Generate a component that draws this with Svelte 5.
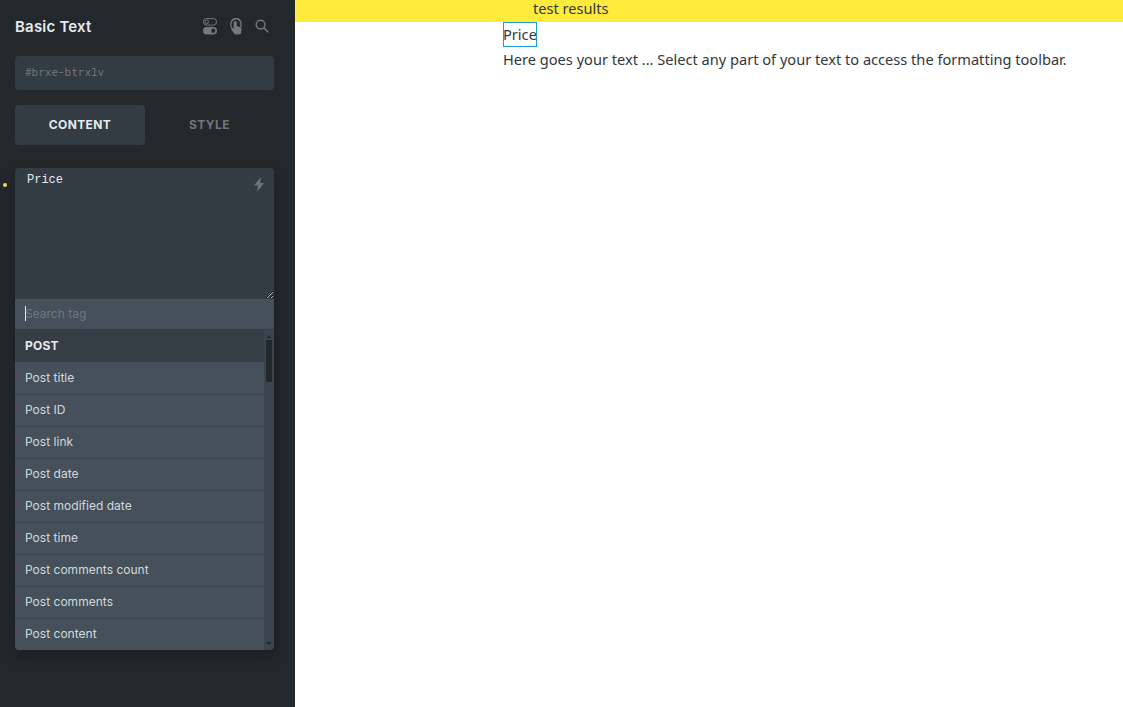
<script>
    let tags = ["Post title","Post ID","Post link","Post date","Post modified date","Post time","Post comments count","Post comments","Post content"];
</script>

<div class="builder">
    <aside class="panel">
        <header class="panelHead">
            <h1>Basic Text</h1>
            <div class="headIcons">
                <svg width="14" height="17" viewBox="0 0 15 17" class="toggles" preserveAspectRatio="none">
                    <rect x="0.5" y="0.500" width="14" height="6.6" rx="3.3" fill="none" stroke="currentColor" stroke-width="1"/>
                    <circle cx="4" cy="3.800" r="1.900" fill="none" stroke="currentColor" stroke-width="1"/>
                    <rect x="0" y="9" width="15" height="7.600" rx="3.800" fill="currentColor"/>
                    <circle cx="11" cy="12.800" r="2.200" fill="#23282d"/>
                </svg>
                <svg width="12" height="17" viewBox="0 0 14 17" class="touch" preserveAspectRatio="none">
                    <path d="M1.800 9.400A6 6 0 1 1 12.200 9.400" fill="none" stroke="currentColor" stroke-width="1.500"/>
                    <path d="M5.200 3.400c1-.7 2.600 0 2.600 1.200v3.500l3.400.9c1.400.4 2.300 1 2.300 2.200l-.5 3.600c-.2 1-.9 1.700-2 1.700H6.400c-.8 0-1.300-.3-1.700-.9L1.300 11c-.6-.9.6-2 1.600-1.200l1.400 1.100V4.600c0-.5.400-1 .9-1.200z" fill="currentColor"/>
                </svg>
                <svg width="14" height="14" viewBox="0 0 14 14" class="search">
                    <circle cx="5.600" cy="5.600" r="4.400" fill="none" stroke="currentColor" stroke-width="1.400"/>
                    <path d="M8.900 8.900L13.200 13.200" stroke="currentColor" stroke-width="1.500"/>
                </svg>
            </div>
        </header>

        <div class="cssId">#brxe-btrxlv</div>

        <div class="tabs">
            <button class="active">CONTENT</button>
            <button class="styleTab">STYLE</button>
        </div>

        <div class="control">
            <span class="dot"></span>
            <div class="box">
                <textarea spellcheck="false">Price</textarea>
                <svg class="bolt" width="10" height="15" viewBox="0 0 10 15">
                    <path d="M7 0L0 8.500H4L3 15L10 6H6Z" fill="currentColor"/>
                </svg>
                <div class="picker">
                    <div class="searchTag"><span class="caret"></span>Search tag</div>
                    <div class="listWrap">
                        <ul>
                            <li class="group">POST</li>
                            {#each tags as tag}
                                <li>{tag}</li>
                            {/each}
                        </ul>
                        <div class="scrollbar">
                            <span class="arrow up"></span>
                            <span class="thumb"></span>
                            <span class="arrow down"></span>
                        </div>
                    </div>
                </div>
            </div>
        </div>
    </aside>

    <main class="page">
        <div class="notice"><span>test results</span></div>
        <div class="content">
            <div class="priceRow"><span class="selected">Price</span></div>
            <p>Here goes your text ... Select any part of your text to access the formatting toolbar.</p>
        </div>
    </main>
</div>

<style>
    :global(body){
        margin: 0;
        background: white;
    }
    .builder{
        display: flex;
        height: 707px;
        overflow: hidden;
        font-family: Inter, "Liberation Sans", sans-serif;
    }
    .panel{
        width: 295px;
        flex-shrink: 0;
        background: #23282d;
        display: flex;
        flex-direction: column;
        padding: 0 21px 0 15px;
        box-sizing: border-box;
    }
    .panelHead{
        height: 56px;
        display: flex;
        align-items: center;
        justify-content: space-between;
        padding-bottom: 4px;
        box-sizing: border-box;
    }
    h1{
        margin: 0;
        font-size: 15px;
        font-weight: 600;
        letter-spacing: 0.2px;
        color: #e6ebee;
    }
    .headIcons{
        display: flex;
        align-items: center;
        gap: 13px;
        color: #74797e;
        margin-right: 5px;
    }
    .cssId{
        height: 34px;
        background: #333b43;
        border-radius: 4px;
        display: flex;
        align-items: center;
        padding: 0 0 3px 10px;
        box-sizing: border-box;
        font-family: "Roboto Mono", "DejaVu Sans Mono", monospace;
        font-size: 11px;
        color: #6f757b;
    }
    .tabs{
        display: grid;
        grid-template-columns: 130px 130px;
        margin-top: 15px;
    }
    .tabs button{
        height: 40px;
        border: none;
        background: transparent;
        border-radius: 4px;
        font-family: inherit;
        font-size: 12px;
        font-weight: 700;
        letter-spacing: 0.4px;
        color: #71767b;
        padding: 0 0 2px;
    }
    .tabs button.active{
        background: #333b43;
        color: #e6ebee;
    }
    .tabs button.styleTab{
        padding-right: 1px;
    }
    .control{
        position: relative;
        margin-top: 23px;
    }
    .dot{
        position: absolute;
        left: -12px;
        top: 15px;
        width: 4px;
        height: 4px;
        border-radius: 50%;
        background: #ffd64f;
    }
    .box{
        position: relative;
        background: #333b43;
        border-radius: 4px;
        box-shadow: 0 6px 14px rgba(0,0,0,0.25);
    }
    textarea{
        display: block;
        width: 100%;
        height: 131px;
        box-sizing: border-box;
        background: transparent;
        border: none;
        outline: none;
        padding: 5px 12px;
        font-family: "Liberation Mono", monospace;
        font-size: 12px;
        line-height: 15px;
        color: #e6ebee;
    }
    .bolt{
        position: absolute;
        top: 9px;
        right: 10px;
        color: #6f757b;
    }
    .searchTag{
        height: 30px;
        background: #46505a;
        display: flex;
        align-items: center;
        padding: 0 0 2px 10px;
        box-sizing: border-box;
        font-size: 12px;
        color: #6f7880;
    }
    .caret{
        width: 1px;
        height: 15px;
        background: #e6ebee;
        margin-right: -1px;
    }
    .listWrap{
        display: flex;
        margin-top: 1px;
        border-radius: 0 0 4px 4px;
        overflow: hidden;
    }
    ul{
        list-style: none;
        margin: 0;
        padding: 0;
        flex: 1;
    }
    li{
        height: 32px;
        box-sizing: border-box;
        padding: 0 0 2px 10px;
        display: flex;
        align-items: center;
        background: #46505a;
        border-top: 1px solid #3d4650;
        font-size: 12px;
        letter-spacing: 0.02px;
        color: #d3d8dc;
    }
    li.group{
        background: #353d45;
        border-top-color: #353d45;
        font-weight: 700;
        color: #e6ebee;
        letter-spacing: 0.2px;
    }
    li.group + li{
        border-top-color: #46505a;
    }
    .scrollbar{
        width: 10px;
        background: #3c454e;
        display: flex;
        flex-direction: column;
        align-items: center;
        padding: 5px 0;
        box-sizing: border-box;
    }
    .thumb{
        width: 6px;
        height: 42px;
        margin-top: 2px;
        background: #23282d;
    }
    .arrow{
        width: 0;
        height: 0;
        border-left: 3px solid transparent;
        border-right: 3px solid transparent;
    }
    .arrow.up{
        border-bottom: 3px solid #23282d;
    }
    .arrow.down{
        margin-top: auto;
        border-top: 3px solid #23282d;
    }
    .page{
        flex: 1;
        font-family: "Noto Sans", sans-serif;
        font-size: 14.6px;
        color: #32373c;
    }
    .notice{
        height: 22px;
        background: #ffeb3b;
        padding-left: 238px;
        line-height: 17px;
    }
    .content{
        padding-left: 208px;
    }
    .priceRow{
        height: 25px;
    }
    .selected{
        display: inline-block;
        height: 25px;
        line-height: 25px;
        box-sizing: border-box;
        outline: 1px solid #1e9bd7;
        outline-offset: -1px;
    }
    p{
        margin: 0;
        line-height: 25px;
    }
</style>
